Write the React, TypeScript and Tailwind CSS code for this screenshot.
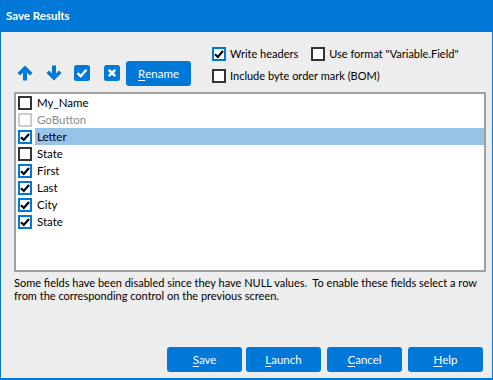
import React from "react";

const FONT = { fontFamily: 'Lato, "Liberation Sans", sans-serif' };

function Box({ state }: { state: "on" | "off" | "disabled" }) {
  const border =
    state === "on" ? "border-[#0078d7]" : state === "off" ? "border-[#333333]" : "border-[#cccccc]";
  return (
    <span className={`flex h-[14px] w-[14px] shrink-0 items-center justify-center border-2 bg-white ${border}`}>
      {state === "on" && (
        <svg width="10" height="10" viewBox="0 0 10 10">
          <path d="M1 5.2 L3.8 8 L9 2" fill="none" stroke="#000" strokeWidth="2.2" />
        </svg>
      )}
    </span>
  );
}

function Arrow({ down }: { down?: boolean }) {
  return (
    <svg width="16" height="16" viewBox="0 0 16 16" className={down ? "rotate-180" : ""}>
      <path d="M8 0.5 L15.5 8 L13 10.5 L10 7.5 V15.5 H6 V7.5 L3 10.5 L0.5 8 Z" fill="#0078d7" />
    </svg>
  );
}

function CheckIcon() {
  return (
    <svg width="16" height="16" viewBox="0 0 16 16">
      <rect x="0" y="0" width="16" height="16" rx="2.5" fill="#0078d7" />
      <path d="M3.5 8.2 L6.6 11.2 L12.5 4.8" fill="none" stroke="#fff" strokeWidth="2.4" />
    </svg>
  );
}

function XIcon() {
  return (
    <svg width="16" height="16" viewBox="0 0 16 16">
      <rect x="0" y="0" width="16" height="16" rx="2.5" fill="#0078d7" />
      <path d="M4.8 4.8 L11.2 11.2 M11.2 4.8 L4.8 11.2" fill="none" stroke="#fff" strokeWidth="2.6" />
    </svg>
  );
}

function Btn({ first, rest, className = "" }: { first: string; rest: string; className?: string }) {
  return (
    <button
      className={`flex h-[25px] w-[75px] items-center justify-center rounded-[3px] bg-[#0078d7] text-[11.5px] text-white ${className}`}
    >
      <span className="underline underline-offset-2">{first}</span>
      {rest}
    </button>
  );
}

const rows: { label: string; state: "on" | "off" | "disabled"; sel?: boolean }[] = [
  { label: "My_Name", state: "off" },
  { label: "GoButton", state: "disabled" },
  { label: "Letter", state: "on", sel: true },
  { label: "State", state: "off" },
  { label: "First", state: "on" },
  { label: "Last", state: "on" },
  { label: "City", state: "on" },
  { label: "State", state: "on" },
];

export default function App() {
  return (
    <div
      style={FONT}
      className="flex h-[380px] w-[493px] flex-col border-x border-b-2 border-[#0078d7] bg-[#ededed] text-[11px] text-black"
    >
      <div className="flex h-[32px] shrink-0 items-center bg-[#0078d7] pl-[5px] text-[11.5px] font-bold text-white">
        Save Results
      </div>
      <div className="flex h-[60px] shrink-0">
        <div className="flex items-end pb-[6px]">
          <div className="mb-[5px] ml-[16px]">
            <Arrow />
          </div>
          <div className="mb-[5px] ml-[13px]">
            <Arrow down />
          </div>
          <div className="mb-[5px] ml-[12px]">
            <CheckIcon />
          </div>
          <div className="mb-[5px] ml-[14px]">
            <XIcon />
          </div>
          <button className="ml-[6px] flex h-[25px] w-[65px] items-center justify-center rounded-[3px] bg-[#0078d7] text-[11.5px] text-white">
            <span className="underline underline-offset-2">R</span>ename
          </button>
        </div>
        <div className="ml-[21px] flex flex-col gap-[8px] pt-[15px]">
          <div className="flex items-center">
            <Box state="on" />
            <span className="ml-[4px] leading-[14px]">Write headers</span>
            <span className="ml-[13px]">
              <Box state="off" />
            </span>
            <span className="ml-[4px] leading-[14px]">Use format "Variable.Field"</span>
          </div>
          <div className="flex items-center">
            <Box state="off" />
            <span className="ml-[4px] leading-[14px]">Include byte order mark (BOM)</span>
          </div>
        </div>
      </div>
      <div className="ml-[13px] h-[180px] w-[472px] border-2 border-[#a0a0a0] bg-white">
        {rows.map((r, i) => (
          <div key={i} className="flex h-[17px] items-center pl-[2px]">
            <Box state={r.state} />
            <span
              className={`ml-[3px] flex h-[17px] flex-1 items-center pl-[2px] text-[11.5px] ${r.sel ? "bg-[#99c4ea]" : ""} ${
                r.state === "disabled" ? "text-[#8c8c8c]" : ""
              }`}
            >
              {r.label}
            </span>
          </div>
        ))}
      </div>
      <p className="ml-[13px] mt-[4px] whitespace-nowrap leading-[13px]">
        Some fields have been disabled since they have NULL values.&nbsp; To enable these fields select a row
        <br />
        from the corresponding control on the previous screen.
      </p>
      <div className="mt-auto mb-[6px] flex justify-end pr-[9px]">
        <Btn first="S" rest="ave" />
        <Btn first="L" rest="aunch" className="ml-[4px]" />
        <Btn first="C" rest="ancel" className="ml-[6px]" />
        <Btn first="H" rest="elp" className="ml-[6px]" />
      </div>
    </div>
  );
}
